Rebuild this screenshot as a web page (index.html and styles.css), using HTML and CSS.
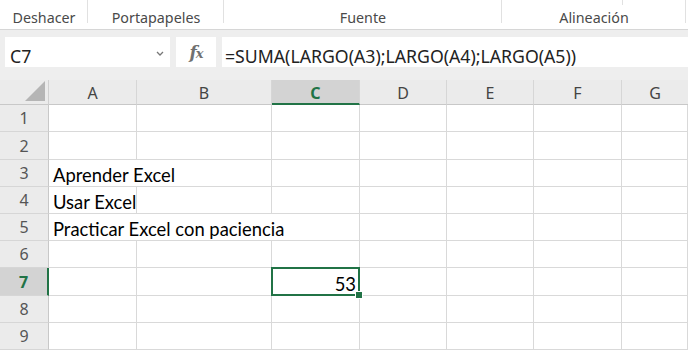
FILE: index.html
```html
<!DOCTYPE html>
<html lang="es">
<head>
    <meta charset="UTF-8">
    <title>Excel - LARGO</title>
    <link rel="stylesheet" href="styles.css">
</head>
<body>

    <!-- Ribbon group labels -->
    <div class="ribbon">
        <div class="group g-undo">Deshacer</div>
        <div class="group g-clip">Portapapeles</div>
        <div class="group g-font">Fuente</div>
        <div class="group g-align">Alineación<span class="tick"></span></div>
    </div>

    <!-- Formula bar -->
    <div class="formula-bar">
        <div class="name-box">
            <span>C7</span>
            <svg width="8" height="5" viewBox="0 0 8 5"><path d="M1 1 L4 4 L7 1" fill="none" stroke="#777" stroke-width="1.3"/></svg>
        </div>
        <div class="fx-box"><i>f<span>x</span></i></div>
        <div class="formula">=SUMA(LARGO(A3);LARGO(A4);LARGO(A5))</div>
    </div>

    <!-- Sheet -->
    <div class="sheet">
        <div class="corner"><span class="tri"></span></div>
        <div class="col-head">A</div>
        <div class="col-head">B</div>
        <div class="col-head active">C</div>
        <div class="col-head">D</div>
        <div class="col-head">E</div>
        <div class="col-head">F</div>
        <div class="col-head last">G</div>

        <div class="row-head">1</div>
        <div class="cell"></div><div class="cell"></div><div class="cell"></div><div class="cell"></div><div class="cell"></div><div class="cell"></div><div class="cell"></div>

        <div class="row-head">2</div>
        <div class="cell"></div><div class="cell"></div><div class="cell"></div><div class="cell"></div><div class="cell"></div><div class="cell"></div><div class="cell"></div>

        <div class="row-head">3</div>
        <div class="cell span2">Aprender Excel</div><div class="cell"></div><div class="cell"></div><div class="cell"></div><div class="cell"></div><div class="cell"></div>

        <div class="row-head">4</div>
        <div class="cell">Usar Excel</div><div class="cell"></div><div class="cell"></div><div class="cell"></div><div class="cell"></div><div class="cell"></div><div class="cell"></div>

        <div class="row-head">5</div>
        <div class="cell span3">Practicar Excel con paciencia</div><div class="cell"></div><div class="cell"></div><div class="cell"></div><div class="cell"></div>

        <div class="row-head">6</div>
        <div class="cell"></div><div class="cell"></div><div class="cell"></div><div class="cell"></div><div class="cell"></div><div class="cell"></div><div class="cell"></div>

        <div class="row-head active">7</div>
        <div class="cell"></div><div class="cell"></div><div class="cell num selected">53<span class="handle"></span></div><div class="cell"></div><div class="cell"></div><div class="cell"></div><div class="cell"></div>

        <div class="row-head">8</div>
        <div class="cell"></div><div class="cell"></div><div class="cell"></div><div class="cell"></div><div class="cell"></div><div class="cell"></div><div class="cell"></div>

        <div class="row-head">9</div>
        <div class="cell"></div><div class="cell"></div><div class="cell"></div><div class="cell"></div><div class="cell"></div><div class="cell"></div><div class="cell"></div>
    </div>

</body>
</html>
```

FILE: styles.css
```css
body {
    margin: 0;
    width: 688px;
    height: 350px;
    overflow: hidden;
    background-color: #ffffff;
    font-family: 'Noto Sans', 'Open Sans', sans-serif;
}

/* Ribbon */
.ribbon {
    display: flex;
    height: 29px;
    border-bottom: 1px solid #d6d6d6;
    background-color: #ffffff;
}

.group {
    position: relative;
    display: flex;
    align-items: flex-end;
    justify-content: center;
    padding-bottom: 4px;
    box-sizing: border-box;
    height: 29px;
    font-size: 14.3px;
    line-height: 1;
    color: #4a4a4a;
}

.group::after {
    content: "";
    position: absolute;
    right: 0;
    top: 0;
    width: 1px;
    height: 23px;
    background-color: #e1e1e1;
}

.g-undo { width: 88px; }
.g-clip { width: 136px; }
.g-font { width: 278px; }
.g-align { width: 184px; }

.group .tick {
    position: absolute;
    top: 0;
    left: 120px;
    width: 1px;
    height: 5px;
    background-color: #e1e1e1;
}

/* Formula bar */
.formula-bar {
    display: flex;
    gap: 6px;
    height: 50px;
    padding: 7px 0 0 5px;
    box-sizing: border-box;
    background-color: #eeeeee;
}

.name-box, .fx-box, .formula {
    height: 30px;
    padding-top: 8px;
    box-sizing: border-box;
    background-color: #ffffff;
    display: flex;
    align-items: center;
    font-size: 17.7px;
    color: #222;
}

.name-box {
    width: 165px;
    justify-content: space-between;
    padding-left: 5px;
    padding-right: 6px;
}

.name-box svg {
    position: relative;
    top: -3px;
}

.fx-box {
    width: 40px;
    justify-content: center;
    padding-top: 0;
}

.fx-box i {
    font-family: 'DejaVu Serif', serif;
    font-weight: bold;
    font-size: 17px;
    color: #707070;
    letter-spacing: -1px;
}

.fx-box i span {
    font-size: 13px;
}

.formula {
    flex-grow: 1;
    padding-left: 3px;
}

/* Sheet */
.sheet {
    display: grid;
    grid-template-columns: 49px 88px 135px 88px 87px 87px 88px 1fr;
    grid-template-rows: 25px 27px 28px 27px 27px 27px 27px 28px 27px 27px;
    background-color: #ffffff;
}

.corner {
    position: relative;
    background-color: #ebebeb;
    border-right: 1px solid #d0d0d0;
    border-bottom: 1px solid #c8c8c8;
}

.corner .tri {
    position: absolute;
    right: 3px;
    bottom: 3px;
    width: 0;
    height: 0;
    border-left: 20px solid transparent;
    border-bottom: 20px solid #b5b5b5;
}

.col-head {
    background-color: #ebebeb;
    border-right: 1px solid #d6d6d6;
    border-bottom: 1px solid #c8c8c8;
    display: flex;
    align-items: center;
    justify-content: center;
    padding-top: 2px;
    box-sizing: border-box;
    font-size: 16px;
    color: #444;
}

.col-head.last {
    border-right: none;
}

.col-head.active {
    background-color: #d3d3d3;
    border-bottom: 2px solid #217346;
    color: #217346;
    font-weight: bold;
}

.row-head {
    background-color: #ebebeb;
    border-right: 1px solid #c8c8c8;
    border-bottom: 1px solid #d6d6d6;
    display: flex;
    align-items: center;
    justify-content: center;
    font-size: 16px;
    color: #555;
}

.row-head.active {
    background-color: #d3d3d3;
    border-right: 2px solid #217346;
    color: #217346;
    font-weight: bold;
}

.cell {
    border-right: 1px solid #d9d9d9;
    border-bottom: 1px solid #d9d9d9;
    display: flex;
    align-items: flex-end;
    padding: 0 0 2px 4px;
    font-family: 'Lato', 'Liberation Sans', sans-serif;
    font-size: 18.4px;
    line-height: 1;
    color: #000;
    white-space: nowrap;
}

.span2 { grid-column: span 2; }
.span3 { grid-column: span 3; }

.cell.num {
    justify-content: flex-end;
    padding-right: 3px;
}

.cell.selected {
    position: relative;
}

.cell.selected::after {
    content: "";
    position: absolute;
    left: -1px;
    top: -1px;
    right: -1px;
    bottom: -1px;
    border: 2px solid #217346;
}

.handle {
    position: absolute;
    right: -4px;
    bottom: -4px;
    width: 6px;
    height: 6px;
    background-color: #217346;
    border: 1px solid #ffffff;
    z-index: 1;
}
```
